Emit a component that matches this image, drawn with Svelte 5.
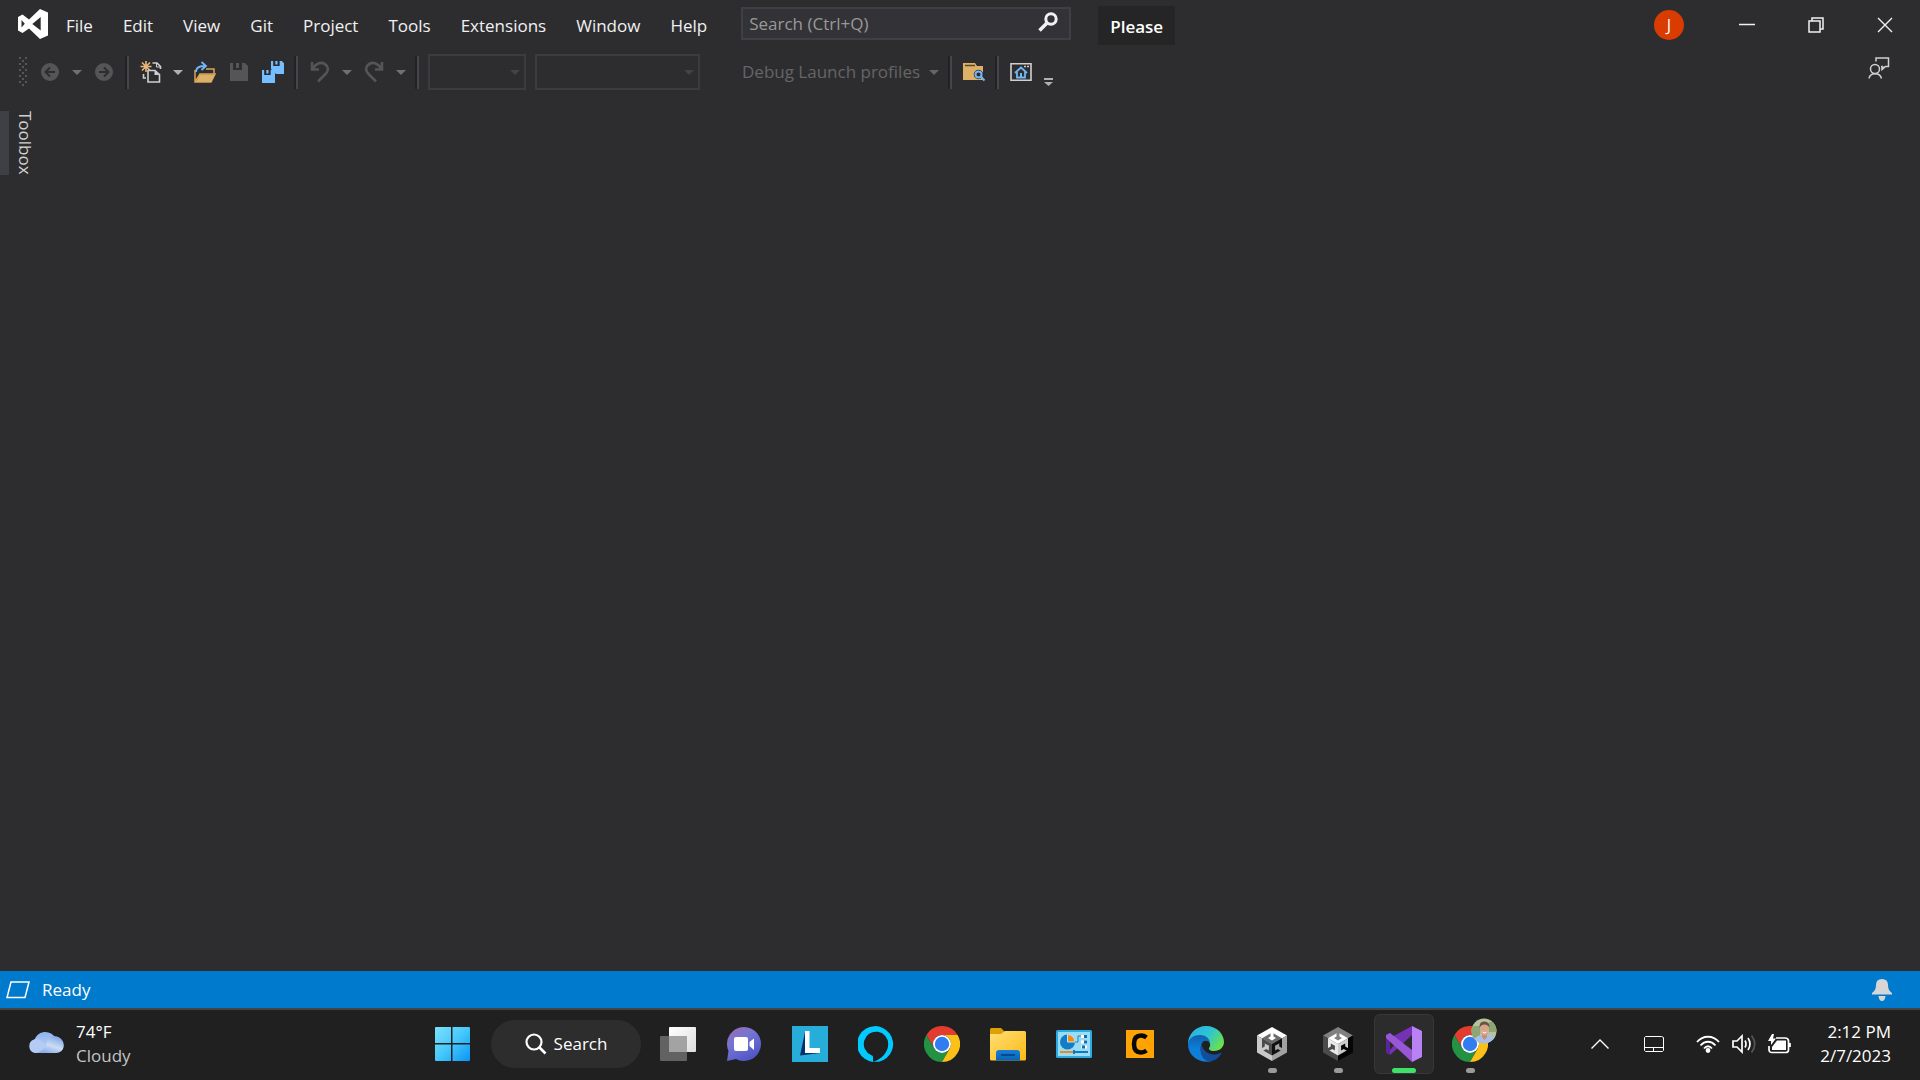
<script lang="ts">
  const menus = ['File', 'Edit', 'View', 'Git', 'Project', 'Tools', 'Extensions', 'Window', 'Help'];

  type App = { id: string; label: string; state?: 'running' | 'active' };

  const apps: App[] = [
    { id: 'taskview', label: 'Task View' },
    { id: 'chat', label: 'Chat' },
    { id: 'lapp', label: 'L' },
    { id: 'alexa', label: 'Alexa' },
    { id: 'chrome', label: 'Google Chrome' },
    { id: 'explorer', label: 'File Explorer' },
    { id: 'control', label: 'Control Panel' },
    { id: 'capp', label: 'C' },
    { id: 'edge', label: 'Microsoft Edge' },
    { id: 'unityhub', label: 'Unity Hub', state: 'running' },
    { id: 'unity', label: 'Unity', state: 'running' },
    { id: 'vs', label: 'Visual Studio', state: 'active' },
    { id: 'profile', label: 'Google Chrome profile', state: 'running' },
  ];

  let query = $state('');
</script>

{#snippet caret()}
  <svg class="caret" width="10" height="5" viewBox="0 0 10 5"><path d="M0 0H10L5 5Z" fill="currentColor" /></svg>
{/snippet}

{#snippet caretButton(label: string, lit: boolean)}
  <button class="tool drop" class:lit aria-label={label}>{@render caret()}</button>
{/snippet}

{#snippet floppy()}
  <path d="M0 0H3V7H12V0H15L18 3V18H0Z M6 0H9V5H6Z" fill="currentColor" />
{/snippet}

{#snippet chromeParts()}
  <path d="M18 9H33.6A18 18 0 0 0 2.4 9L10.2 22.5A9 9 0 0 1 18 9Z" fill="#e33b2e" />
  <path d="M10.2 22.5L2.4 9A18 18 0 0 0 18 36L25.8 22.5A9 9 0 0 1 10.2 22.5Z" fill="#229342" />
  <path d="M25.8 22.5L18 36A18 18 0 0 0 33.6 9H18A9 9 0 0 1 25.8 22.5Z" fill="#fbc116" />
  <circle cx="18" cy="18" r="9" fill="#fff" />
  <circle cx="18" cy="18" r="7.2" fill="#2f7df0" />
{/snippet}

{#snippet unityCube(top: string, left: string, right: string, a: string, b: string, c: string)}
  <path d="M18 1L33 9.5L18 18L3 9.5Z" fill={top} />
  <path d="M3 9.5L18 18V35L3 26.5Z" fill={left} />
  <path d="M33 9.5L18 18V35L33 26.5Z" fill={right} />
  <path d="M8 12.200L18 6.500L28 12.200L18 18Z" fill={a} />
  <path d="M8 12.200L18 18V29.500L8 23.800Z" fill={b} />
  <path d="M28 12.200L18 18V29.500L28 23.800Z" fill={c} />
  <path d="M16.500 5.500H19.500V10.500L22 12L18 14.500L14 12L16.500 10.500Z" fill={top} />
  <path d="M16.500 5.500H19.500V10.500L22 12L18 14.500L14 12L16.500 10.500Z" fill={right} transform="rotate(120 18 18)" />
  <path d="M16.500 5.500H19.500V10.500L22 12L18 14.500L14 12L16.500 10.500Z" fill={left} transform="rotate(240 18 18)" />
{/snippet}

{#snippet appIcon(id: string)}
  <svg width="36" height="36" viewBox="0 0 36 36">
    {#if id === 'taskview'}
      <rect x="9" y="1" width="27" height="25" rx="1" fill="url(#tv-front)" />
      <rect x="0" y="10" width="27" height="25" rx="1" fill="#626262" />
      <path d="M9 10H27V26H9Z" fill="#a3a3a3" />
    {:else if id === 'chat'}
      <path d="M18 1A17 17 0 1 1 10 33L1 35L2.500 25A17 17 0 0 1 18 1Z" fill="url(#chat-fill)" />
      <rect x="8" y="11" width="14" height="14" rx="2" fill="#fff" />
      <path d="M23.500 16L28 12.500V24L23.500 20Z" fill="#fff" />
    {:else if id === 'lapp'}
      <path d="M0 0H36V36H0Z" fill="#27add9" />
      <path d="M13 6L8 29.500L28 27L13 26Z" fill="#08306c" />
      <path d="M13 5H17.500V22H28V27H13Z" fill="#fff" />
    {:else if id === 'alexa'}
      <path d="M15 36A18 18 0 1 1 21 35.700C18 36 16 35.800 15 35.500V31C15 29.800 14.500 29.800 13 29A12.200 12.200 0 1 1 30.200 18C30.200 27 23 33 16 35.500" fill="#00caff" fill-rule="evenodd" />
    {:else if id === 'chrome'}
      {@render chromeParts()}
    {:else if id === 'explorer'}
      <path d="M0 3.500Q0 2 1.500 2H11L15 6H27V15H0Z" fill="#dda006" />
      <path d="M0 8H11L15 5H34.500Q36 5 36 6.500V33Q36 34.500 34.500 34.500H1.500Q0 34.500 0 33Z" fill="url(#folder-fill)" />
      <path d="M6 34.500V27Q6 24 9 24H27Q30 24 30 27V34.500Z" fill="url(#folder-blue)" />
      <path d="M11 29H25" stroke="#08478d" stroke-width="2" />
    {:else if id === 'control'}
      <rect x="0" y="4" width="36" height="28" rx="1.500" fill="#2dabdf" />
      <rect x="2" y="6" width="32" height="24" fill="#99dcf6" />
      <circle cx="11.500" cy="16" r="7.500" fill="#147bc7" />
      <path d="M11.500 16V8.500A7.500 7.500 0 0 1 19 16Z" fill="#f78b0b" stroke="#b9e9fa" stroke-width="1" />
      <path d="M19 16H22V10H25" fill="none" stroke="#267fab" />
      <path d="M25 10.500H31M25 16H31M25 21H31" stroke="#fff" stroke-width="3" />
      <path d="M28 10.500H31M28 16H31M26 21H29" stroke="#166fac" stroke-width="3" />
      <path d="M4 26H17" stroke="#f08a17" stroke-width="2" />
      <path d="M18 26H32M18 24V28" stroke="#1676bd" stroke-width="2" />
    {:else if id === 'capp'}
      <path d="M4 4H32V32H4Z" fill="#ffa304" />
      <path d="M24.500 11.500Q22 9.500 19 9.500Q12 9.500 12 18Q12 26.500 19 26.500Q22 26.500 24.500 24.500" fill="none" stroke="#080808" stroke-width="4.500" />
    {:else if id === 'edge'}
      <path d="M18 0C29 0 36 8 36 16C36 21 32 25 26 25C22 25 20.500 23.500 21 22C24 19 21 13 16 12C9 10.500 2 14 0 18C0 8 8 0 18 0Z" fill="url(#edge-top)" />
      <path d="M0 18C1 12 6 9 12 9C18 9 22 13 22 17C20 14 15 14 13.500 18C10 27 18 36 24 35C13 38 0 31 0 18Z" fill="url(#edge-blue)" />
      <path d="M13.500 18C10 29 17 37 24 35C28 34 31.500 31 33 28C34 27 33 26.500 32 27C25 31 15 27 13.500 18Z" fill="#114f9c" />
    {:else if id === 'unityhub'}
      {@render unityCube('#ffffff', '#cacaca', '#a2a2a2', '#6b6b6b', '#4b4b4b', '#111111')}
    {:else if id === 'unity'}
      {@render unityCube('#818181', '#4b4b4b', '#050505', '#ffffff', '#e9e9e9', '#cccccc')}
    {:else if id === 'vs'}
      <path d="M0 9L4 7V29L0 27Z" fill="#5b2699" />
      <path d="M4 12L9 18L4 24L4 29L26 9V0Z" fill="#7532b4" />
      <path d="M0 9L4 7L26 24V36L0 12Z" fill="#9857d7" />
      <path d="M26 0L36 5V31L26 36Z" fill="#b981f3" />
    {:else if id === 'profile'}
      {@render chromeParts()}
    {/if}
  </svg>
{/snippet}

<!-- gradients shared by the taskbar icons -->
<svg class="defs" width="0" height="0" aria-hidden="true">
  <defs>
    <linearGradient id="win-fill" x1="0" y1="0" x2="36" y2="36" gradientUnits="userSpaceOnUse">
      <stop offset="0" stop-color="#83e1fc" /><stop offset=".5" stop-color="#45c9fb" /><stop offset="1" stop-color="#0893f6" />
    </linearGradient>
    <linearGradient id="tv-front" x1="0" y1="0" x2="1" y2="1">
      <stop offset="0" stop-color="#ffffff" /><stop offset="1" stop-color="#dddddd" />
    </linearGradient>
    <linearGradient id="chat-fill" x1="0" y1="0" x2=".6" y2="1">
      <stop offset="0" stop-color="#a16bb2" /><stop offset=".45" stop-color="#7475d2" /><stop offset="1" stop-color="#5056c8" />
    </linearGradient>
    <linearGradient id="folder-fill" x1="0" y1="0" x2="1" y2="1">
      <stop offset="0" stop-color="#ffdf76" /><stop offset="1" stop-color="#fdb913" />
    </linearGradient>
    <linearGradient id="folder-blue" x1="0" y1="0" x2="0" y2="1">
      <stop offset="0" stop-color="#167fd8" /><stop offset="1" stop-color="#0964b4" />
    </linearGradient>
    <linearGradient id="edge-top" x1="0" y1=".1" x2="1" y2=".6">
      <stop offset="0" stop-color="#28afea" /><stop offset=".55" stop-color="#2fc4d2" /><stop offset="1" stop-color="#6be04d" />
    </linearGradient>
    <linearGradient id="edge-blue" x1="0" y1="0" x2="0" y2="1">
      <stop offset="0" stop-color="#105fab" /><stop offset=".5" stop-color="#0c7fd9" /><stop offset="1" stop-color="#127ed6" />
    </linearGradient>
    <linearGradient id="cloud-back" x1="0" y1="0" x2="0" y2="1">
      <stop offset="0" stop-color="#8fb3ee" /><stop offset="1" stop-color="#c2d5f5" />
    </linearGradient>
    <linearGradient id="cloud-front" x1="1" y1="0" x2=".4" y2="1">
      <stop offset="0" stop-color="#719be0" /><stop offset=".6" stop-color="#cbdcf5" /><stop offset="1" stop-color="#8bacec" />
    </linearGradient>
  </defs>
</svg>

<div class="screen">
  <header class="titlebar">
    <svg class="logo" width="30" height="30" viewBox="0 0 30 30">
      <path d="M22 0L30 3.500V26.500L22 30L11 19.500L4.500 24L0 21.500V8L4.500 5.500L11 10.500ZM22.700 8L14.300 15L22.700 21.500ZM3.500 11V18.500L6.800 14.800Z" fill="#fff" fill-rule="evenodd" />
    </svg>
    <nav class="menu">
      {#each menus as item}
        <button>{item}</button>
      {/each}
    </nav>
    <div class="search">
      <input type="text" placeholder="Search (Ctrl+Q)" aria-label="Search" bind:value={query} />
      <svg width="20" height="20" viewBox="0 0 20 20" fill="none" stroke="#f1f1f1">
        <circle cx="13" cy="7" r="5.200" stroke-width="3" /><path d="M9 11L1.500 18.500" stroke-width="3.500" />
      </svg>
    </div>
    <div class="solution">Please</div>
    <div class="window-side">
      <button class="avatar" aria-label="Account">J</button>
      <button class="win" aria-label="Minimize">
        <svg width="16" height="16" viewBox="0 0 16 16"><path d="M0 7.500H16" stroke="#f1f1f1" stroke-width="1.500" /></svg>
      </button>
      <button class="win" aria-label="Restore">
        <svg width="16" height="16" viewBox="0 0 16 16" fill="none" stroke="#f1f1f1" stroke-width="1.500"><path d="M1 4H12V15H1ZM4 4V1H15V12H12" /></svg>
      </button>
      <button class="win" aria-label="Close">
        <svg width="16" height="16" viewBox="0 0 16 16"><path d="M1 1L15 15M15 1L1 15" stroke="#f1f1f1" stroke-width="1.400" /></svg>
      </button>
    </div>
  </header>

  <div class="toolbar">
    <span class="grip"></span>
    <button class="tool" aria-label="Navigate Backward">
      <svg width="18" height="18" viewBox="0 0 18 18"><circle cx="9" cy="9" r="9" fill="currentColor" /><path d="M14 9H5M9 4.500L4.500 9L9 13.500" fill="none" stroke="#2d2d30" stroke-width="2" /></svg>
    </button>
    {@render caretButton('Backward history', false)}
    <button class="tool" aria-label="Navigate Forward">
      <svg width="18" height="18" viewBox="0 0 18 18"><circle cx="9" cy="9" r="9" fill="currentColor" /><path d="M4 9H13M9 4.500L13.500 9L9 13.500" fill="none" stroke="#2d2d30" stroke-width="2" /></svg>
    </button>
    <span class="sep"></span>
    <button class="tool" aria-label="New Project">
      <svg width="22" height="22" viewBox="0 0 22 22" fill="none">
        <path d="M6 0V11M.500 5.500H11.500M2 1.500L10 9.500M10 1.500L2 9.500" stroke="#e8b577" stroke-width="1.600" />
        <path d="M12.500 2H17L20.500 5.500V8M3.500 13V17H6" stroke="#d0d0d0" stroke-width="1.600" />
        <path d="M16.500 2V6H20.500" stroke="#d0d0d0" />
        <path d="M8 9.500H15L19.500 13.500V21H8Z" stroke="#d0d0d0" stroke-width="1.600" />
        <path d="M14.500 9.500V14H19.500" fill="#d0d0d0" />
      </svg>
    </button>
    {@render caretButton('New options', true)}
    <button class="tool" aria-label="Open File">
      <svg width="22" height="22" viewBox="0 0 22 22" fill="none">
        <path d="M1 9V21H17L21 13H6L1 21M12 8H20V13" stroke="#d9a456" stroke-width="1.500" />
        <path d="M6 13.500H21L17 21H2Z" fill="#dcb067" />
        <path d="M2 11C2 6 6 5 11 5M7.500 1L12 5L7.500 9" stroke="#6fb7f7" stroke-width="1.800" />
      </svg>
    </button>
    <button class="tool" aria-label="Save">
      <svg width="18" height="18" viewBox="0 0 18 18" fill-rule="evenodd">{@render floppy()}</svg>
    </button>
    <button class="tool save-all" aria-label="Save All">
      <svg width="22" height="22" viewBox="0 0 22 22" fill-rule="evenodd">
        <g transform="translate(9 0) scale(.722)">{@render floppy()}</g>
        <path d="M-1 8H9L14 13V23H-1Z" fill="#2d2d30" />
        <g transform="translate(0 9) scale(.722)">{@render floppy()}</g>
      </svg>
    </button>
    <span class="sep"></span>
    <button class="tool" aria-label="Undo">
      <svg width="20" height="22" viewBox="0 0 20 22" fill="none" stroke="currentColor" stroke-width="2.600"><path d="M2 1V8.500H9M2.500 8C6 2 12 0 16 4C19 7 18 10.500 15.500 13L8 20.500" /></svg>
    </button>
    {@render caretButton('Undo history', false)}
    <button class="tool" aria-label="Redo">
      <svg width="20" height="22" viewBox="0 0 20 22" fill="none" stroke="currentColor" stroke-width="2.600"><path d="M18 1V8.500H11M17.500 8C14 2 8 0 4 4C1 7 2 10.500 4.500 13L12 20.500" /></svg>
    </button>
    {@render caretButton('Redo history', false)}
    <span class="sep"></span>
    <div class="combo">
      <select aria-label="Solution Configurations" disabled><option></option></select>
      {@render caret()}
    </div>
    <div class="combo wide">
      <select aria-label="Solution Platforms" disabled><option></option></select>
      {@render caret()}
    </div>
    <button class="launch">Debug Launch profiles <span class="launch-caret">{@render caret()}</span></button>
    <span class="sep"></span>
    <button class="tool" aria-label="Find in Files">
      <svg width="22" height="20" viewBox="0 0 22 20">
        <path d="M0 1H12L14 4H20V18H0Z" fill="#dcb067" />
        <path d="M2 3.500H12" stroke="#5b4625" stroke-width="1.500" />
        <circle cx="15.500" cy="12.500" r="4" fill="#2d2d30" stroke="#2d2d30" stroke-width="1.500" />
        <circle cx="15.500" cy="12.500" r="3" fill="none" stroke="#6fb7f7" stroke-width="2" />
        <path d="M17.500 14.500L21.500 18.500" stroke="#6fb7f7" stroke-width="2.200" />
      </svg>
    </button>
    <span class="sep"></span>
    <button class="tool" aria-label="Start Window">
      <svg width="22" height="20" viewBox="0 0 22 20" fill="none">
        <path d="M1 1.800H21V18.200H1Z" stroke="#d0d0d0" stroke-width="1.600" />
        <path d="M14 4.500H16M17 4.500H19" stroke="#d0d0d0" stroke-width="1.500" />
        <path d="M5 11L11 5.500L17 11M7 10V15.500H15V10" stroke="#6fb7f7" stroke-width="1.800" />
        <path d="M10 11H12V16H10Z" fill="#6fb7f7" />
      </svg>
    </button>
    <button class="tool drop lit overflow" aria-label="Toolbar Options">
      <svg width="9" height="8" viewBox="0 0 9 8" fill="currentColor"><path d="M0 0H9V2H0ZM0 4H9L4.500 8Z" /></svg>
    </button>
    <button class="feedback" aria-label="Send Feedback">
      <svg width="22" height="22" viewBox="0 0 22 22" fill="none" stroke="#d0d0d0" stroke-width="1.500">
        <path d="M8 4.500V1H20.500V9.500H17.500L14 12.500V9.500H13" /><path d="M14 9.500H17L14 12.500Z" fill="#d0d0d0" stroke="none" /><circle cx="7" cy="12" r="4.500" /><path d="M1 21.500C2 15 12 15 13.500 21.500" />
      </svg>
    </button>
  </div>

  <main class="workspace">
    <button class="toolbox">Toolbox</button>
  </main>

  <footer class="statusbar">
    <svg width="24" height="18" viewBox="0 0 24 18"><path d="M5 1H23L19 16.500H1Z" fill="none" stroke="#fff" stroke-width="1.500" /></svg>
    <span>Ready</span>
    <button class="bell" aria-label="Notifications">
      <svg width="20" height="22" viewBox="0 0 20 22" fill="#d6d6d6"><path d="M0 14Q4 11.500 4 6Q4 0 10 0Q16 0 16 6Q16 11.500 20 14V15.500H0ZM6.500 17H13.500Q13 22 10 22Q7 22 6.500 17Z" /></svg>
    </button>
  </footer>

  <div class="taskbar">
    <button class="weather">
      <svg width="36" height="24" viewBox="0 0 36 24">
        <path d="M6 12A11.500 11.500 0 0 1 28 9L26 22H7Z" fill="url(#cloud-back)" />
        <path d="M7 23A7 7 0 0 1 6 9.500C11 8 13 11 16 13L18 23Z" fill="#b4ccf4" />
        <path d="M7 23C14 22 18 17 19 12C21 6 28 5 32 8C38 12 37 23 28 23Z" fill="url(#cloud-front)" />
      </svg>
      <span class="forecast"><span>74°F</span><span class="sky">Cloudy</span></span>
    </button>

    <div class="apps">
      <button class="app start" aria-label="Start">
        <svg width="36" height="36" viewBox="0 0 36 36"><path d="M2 1H17V17H1V2Q1 1 2 1ZM18.500 1H35Q36 1 36 2V17H18.500ZM1 18.500H17V35H2Q1 35 1 34ZM18.500 18.500H36V34Q36 35 35 35H18.500Z" fill="url(#win-fill)" /></svg>
      </button>
      <button class="find">
        <svg width="22" height="22" viewBox="0 0 22 22" fill="none" stroke="#fff" stroke-width="2.200"><circle cx="9" cy="9" r="7.500" /><path d="M14.500 14.500L20.500 20.500" stroke-width="2.600" /></svg>
        Search
      </button>
      {#each apps as app}
        <button class="app {app.state ?? ''}" aria-label={app.label}>
          {@render appIcon(app.id)}
          {#if app.id === 'profile'}
            <svg class="photo" width="26" height="26" viewBox="0 0 26 26">
              <defs><clipPath id="photo-clip"><circle cx="13" cy="13" r="12.500" /></clipPath></defs>
              <g clip-path="url(#photo-clip)">
                <path d="M0 0H26V26H0Z" fill="#b7c3a0" />
                <path d="M0 8H9V20H0ZM18 4H26V14H18Z" fill="#8ea574" />
                <path d="M2 26Q3 18 10 17H17Q25 18 26 26Z" fill="#a9bee4" />
                <path d="M11 15H16V19L13.500 22L11 19Z" fill="#c48f72" />
                <ellipse cx="13.500" cy="11.500" rx="4.500" ry="6" fill="#d9a58a" />
                <path d="M8.500 10Q8 3 13.500 3.500Q19 3.500 18.500 10Q17 6.500 13.500 6.500Q10 6.500 8.500 10Z" fill="#695343" />
                <path d="M11.500 14Q13.500 16 15.500 14" fill="none" stroke="#fff" />
              </g>
            </svg>
          {/if}
        </button>
      {/each}
    </div>

    <div class="tray">
      <button class="chevron" aria-label="Show hidden icons">
        <svg width="18" height="10" viewBox="0 0 18 10" fill="none" stroke="#fff" stroke-width="1.400"><path d="M.500 9.500L9 1L17.500 9.500" /></svg>
      </button>
      <button class="touchpad" aria-label="Virtual touchpad">
        <svg width="20" height="16" viewBox="0 0 20 16" fill="none" stroke="#fff"><path d="M1.500 .500H17.500L19.500 1.500V14.500L18.500 15.500H1.500L.500 14.500V1.500ZM.500 11.500H19.500M9.500 11.500V15.500" /></svg>
      </button>
      <button class="system" aria-label="Network, volume and battery">
        <svg width="24" height="18" viewBox="0 0 24 18" fill="none" stroke="#fff" stroke-width="1.800"><path d="M1 7C7 0 17 0 23 7M4.500 10.500C9 5.500 15 5.500 19.500 10.500M8 13.500C10.500 10.500 13.500 10.500 16 13.500" /><circle cx="12" cy="15.500" r="1.500" fill="#fff" /></svg>
        <svg width="24" height="20" viewBox="0 0 24 20" fill="none" stroke="#fff" stroke-width="1.700"><path d="M1 7H5L10 2V18L5 13H1ZM13 6.500Q15 10 13 13.500M16 4Q20 10 16 16" /><path d="M19.500 1.500Q26 10 19.500 18.500" stroke="#555" /></svg>
        <svg width="24" height="20" viewBox="0 0 24 20" fill="none" stroke="#fff" stroke-width="1.700"><path d="M8 4H17Q20.500 4 20.500 7V16Q20.500 18.500 17.500 18.500H4Q1 18.500 1 15.500V12M22 9V13" /><path d="M9 6.500H18V16H4V13Z" fill="#fff" stroke="none" /><path d="M4 0L0 7H3V11L8 4.500H5L6 0Z" fill="#fff" stroke="none" /></svg>
      </button>
      <button class="clock"><span>2:12 PM</span><span>2/7/2023</span></button>
    </div>
  </div>
</div>

<style>
  :global(body) {
    background: #2d2d30;
    font-family: "Segoe UI", "Open Sans", "Noto Sans", sans-serif;
    font-size: 17px;
    line-height: 24px;
    color: #f1f1f1;
  }

  button {
    display: flex;
    align-items: center;
    justify-content: center;
    padding: 0;
    border: 0;
    background: none;
    color: inherit;
    font: inherit;
    white-space: nowrap;
  }

  svg {
    display: block;
    flex: none;
  }

  .defs {
    position: absolute;
  }

  .screen {
    display: flex;
    flex-direction: column;
    min-height: 100vh;
  }

  .titlebar {
    display: flex;
    align-items: flex-start;
    height: 52px;
    padding: 0 1px 0 18px;
  }

  .logo {
    margin-top: 9px;
  }

  .menu {
    display: flex;
    padding-top: 14px;
    margin-left: 3px;
  }

  .menu button {
    padding: 0 15px;
  }

  .search {
    display: flex;
    align-items: center;
    box-sizing: border-box;
    width: 330px;
    height: 33px;
    margin: 7px 27px 0 19px;
    padding: 0 11px 0 6px;
    border: 2px solid #3f3f46;
    background: #333337;
  }

  .search svg {
    margin-bottom: 3px;
  }

  .search input {
    flex: 1;
    min-width: 0;
    padding: 0;
    border: 0;
    outline: 0;
    background: none;
    color: #f1f1f1;
    font: inherit;
  }

  .search input::placeholder {
    color: #999;
    opacity: 1;
  }

  .solution {
    box-sizing: border-box;
    height: 39px;
    margin-top: 6px;
    padding: 9px 12px 0;
    background: #252526;
    color: #fff;
    font-weight: 600;
  }

  .window-side {
    display: flex;
    align-items: center;
    height: 49px;
    margin-left: auto;
  }

  .avatar {
    width: 30px;
    height: 30px;
    margin-right: 28px;
    border-radius: 50%;
    background: #da3b01;
    color: #fff;
    font-size: 16px;
  }

  .win {
    width: 69px;
    height: 48px;
  }

  .toolbar {
    display: flex;
    align-items: center;
    height: 40px;
    padding-left: 19px;
    color: #555558;
  }

  .grip {
    width: 8px;
    height: 30px;
    margin-right: 6px;
    background:
      radial-gradient(circle at 1px 1px, #55555a 1px, transparent 1px) 0 0 / 6px 6px,
      radial-gradient(circle at 1px 1px, #55555a 1px, transparent 1px) 3px 3px / 6px 6px;
  }

  .tool {
    width: 34px;
    height: 34px;
  }

  .drop {
    width: 20px;
    color: #717171;
  }

  .lit {
    color: #b0b0b0;
  }

  .overflow {
    align-items: flex-end;
    height: 28px;
  }

  .save-all {
    color: #75beff;
  }

  .sep {
    box-sizing: border-box;
    width: 4px;
    height: 33px;
    margin: 0 5px 0 4px;
    border-left: 2px solid #222224;
    border-right: 2px solid #46464a;
  }

  .combo {
    position: relative;
    width: 98px;
    height: 36px;
    margin: 0 5px 0 4px;
    color: #434346;
  }

  .combo.wide {
    width: 165px;
  }

  .combo select {
    appearance: none;
    width: 100%;
    height: 100%;
    padding: 0 8px;
    border: 2px solid #434346;
    border-radius: 0;
    background: none;
    font: inherit;
  }

  .combo :global(.caret) {
    position: absolute;
    right: 6px;
    top: 16px;
  }

  .launch {
    justify-content: space-between;
    min-width: 202px;
    margin-left: 37px;
    color: #656565;
  }

  .launch-caret {
    display: grid;
    place-items: center;
    width: 20px;
  }

  .feedback {
    margin: 0 30px 8px auto;
  }

  .workspace {
    flex: 1;
    padding-top: 19px;
  }

  .toolbox {
    box-sizing: border-box;
    min-height: 63px;
    padding-left: 4px;
    border-left: 9px solid #3f3f46;
    color: #d0d0d0;
    writing-mode: vertical-rl;
  }

  .statusbar {
    display: flex;
    align-items: center;
    gap: 12px;
    height: 37px;
    padding: 0 28px 0 6px;
    border-bottom: 2px solid #444446;
    background: #007acc;
    color: #fff;
  }

  .bell {
    margin-left: auto;
  }

  .taskbar {
    display: grid;
    grid-template-columns: 1fr auto 1fr;
    align-items: center;
    box-sizing: border-box;
    height: 70px;
    padding-bottom: 2px;
    background: #202020;
    color: #fff;
  }

  .weather {
    justify-self: start;
    gap: 12px;
    margin-left: 28px;
  }

  .weather svg {
    margin-bottom: 4px;
  }

  .forecast,
  .clock {
    display: flex;
    flex-direction: column;
    align-items: flex-start;
  }

  .sky {
    color: #c5c5c5;
  }

  .apps {
    display: flex;
    align-items: center;
    gap: 6px;
  }

  .app {
    position: relative;
    box-sizing: border-box;
    width: 60px;
    height: 60px;
    border: 1px solid transparent;
    border-radius: 6px;
  }

  .app.start {
    width: 64px;
  }

  .app.active {
    border-color: #383838;
    background: #2c2c2c;
  }

  .app.running::after,
  .app.active::after {
    content: '';
    position: absolute;
    bottom: 0;
    width: 9px;
    height: 5px;
    border-radius: 3px;
    background: #9a9a9a;
  }

  .app.active::after {
    width: 24px;
    background: #3de366;
  }

  .photo {
    position: absolute;
    top: 3px;
    right: 2px;
  }

  .find {
    gap: 7px;
    width: 150px;
    height: 48px;
    margin: 0 1px;
    border-radius: 24px;
    background: #2d2d2d;
  }

  .tray {
    display: flex;
    align-items: center;
    justify-self: end;
    padding-right: 29px;
  }

  .chevron {
    margin-right: 35px;
  }

  .touchpad {
    margin-right: 32px;
  }

  .system {
    gap: 12px;
    margin-right: 28px;
  }

  .clock {
    align-items: flex-end;
  }
</style>
